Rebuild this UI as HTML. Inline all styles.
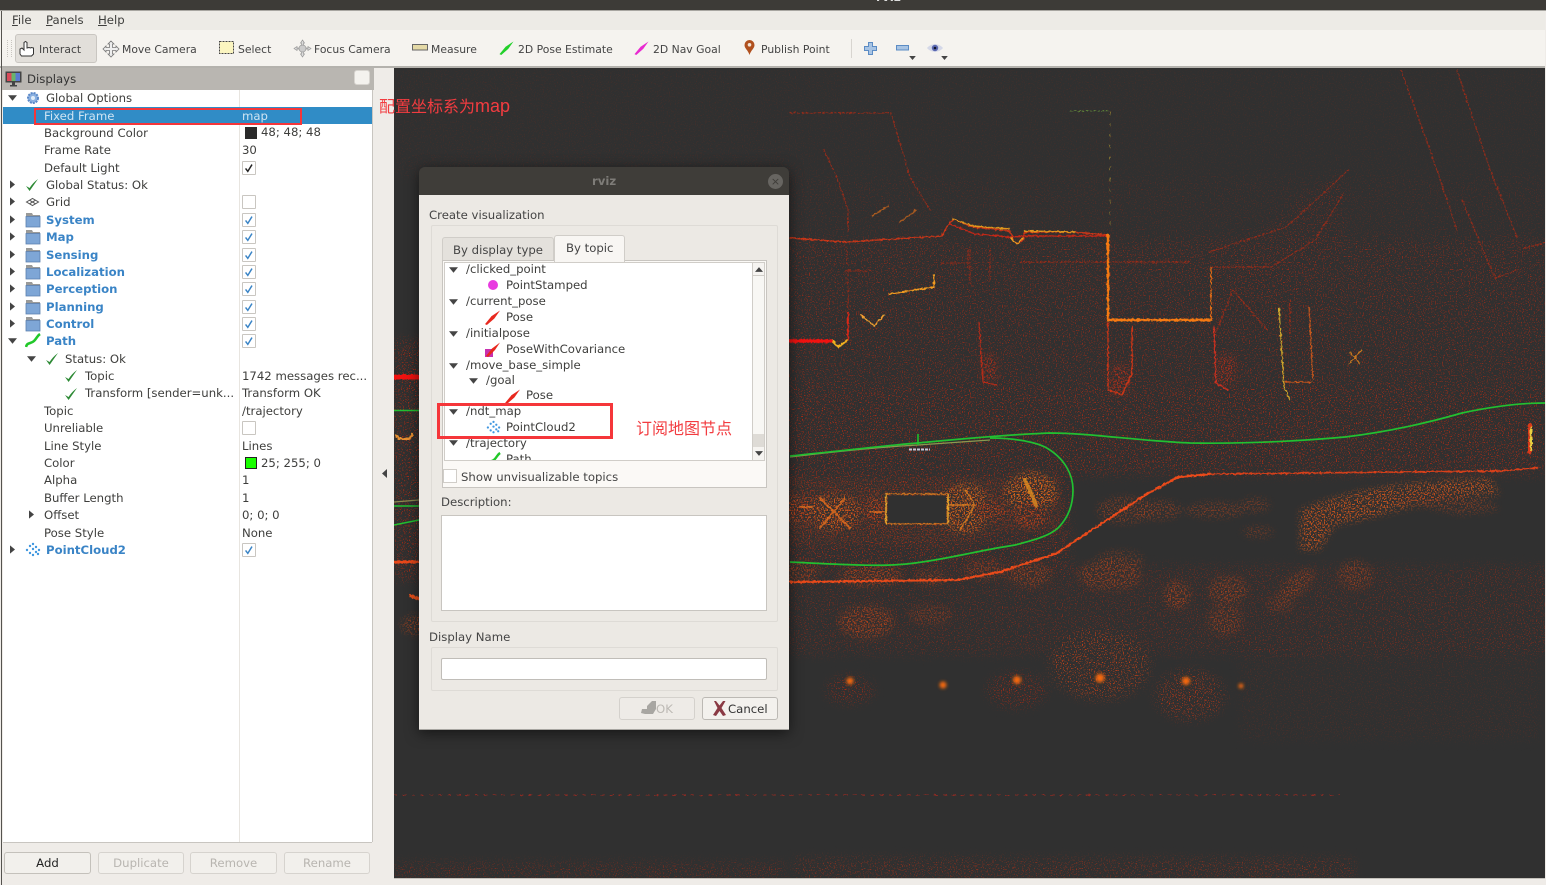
<!DOCTYPE html>
<html><head><meta charset="utf-8"><title>rviz</title>
<style>
html,body{margin:0;padding:0;background:#efece8}
body{position:relative;width:1546px;height:885px;overflow:hidden;font-family:"DejaVu Sans","Liberation Sans",sans-serif;font-size:11.7px;color:#3e3e3c;filter:blur(.35px)}
.a{position:absolute}
.t{position:absolute;line-height:16px;white-space:nowrap}
.p .t{margin-top:1px}
.p .t.n{margin-top:0}
.d .t{margin-top:-1px}
.b{font-weight:bold;color:#3a84c6}
.bt{position:absolute;box-sizing:border-box;height:22px;line-height:21px;text-align:center;background:#f2f0ec;border:1px solid #c4c1bb;border-radius:3px}
.dis{color:#b8b5b0;border-color:#d6d3ce}
.tb{position:absolute;top:42px;line-height:16px;font-size:10.8px;white-space:nowrap;color:#444;margin-top:0}
svg.i{position:absolute;overflow:visible}
.ck{position:absolute;left:242px;width:14px;height:14px;box-sizing:border-box;background:#fff;border:1px solid #c9c6c1;border-radius:1px}
.red{position:absolute;box-sizing:border-box;border:3px solid #f5363a}
.ann{position:absolute;color:#f23c40;font-size:16px;line-height:20px;white-space:nowrap;font-family:"Liberation Sans","Noto Sans CJK SC",sans-serif}
</style></head><body>
<svg width="0" height="0" style="position:absolute"><defs>
<symbol id="folder" viewBox="0 0 16 16"><path d="M1 1h6l1 2h7v12H1z" fill="#9a9a98"/><path d="M1 4.500h14V15H1z" fill="#7ea6d6" stroke="#5a7fae" stroke-width=".8"/></symbol>
<symbol id="chk" viewBox="0 0 14 14"><path d="M3 7.500l2.600 3.400L10.500 3" fill="none" stroke="#3a84c6" stroke-width="1.700"/></symbol>
<symbol id="chkk" viewBox="0 0 14 14"><path d="M3 7.500l2.600 3.400L10.500 3" fill="none" stroke="#222" stroke-width="1.700"/></symbol>
<symbol id="ok" viewBox="0 0 14 14"><path d="M1 8l3.600 5L13 1C9 4 6.400 7 4.600 10z" fill="#2d8a35"/></symbol>
<symbol id="ra" viewBox="0 0 6 10"><path d="M0 0l6 5-6 5z" fill="#444"/></symbol>
<symbol id="da" viewBox="0 0 10 6"><path d="M0 0h10L5 6z" fill="#444"/></symbol>
<symbol id="pc" viewBox="0 0 16 16"><g fill="#3f97e0"><circle cx="2" cy="8" r="1.200"/><circle cx="5" cy="4" r="1.200"/><circle cx="5" cy="11" r="1.200"/><circle cx="8" cy="2" r="1.200"/><circle cx="8" cy="7" r="1.200"/><circle cx="8" cy="13" r="1.200"/><circle cx="11" cy="5" r="1.200"/><circle cx="11" cy="10" r="1.200"/><circle cx="14" cy="8" r="1.200"/><circle cx="13" cy="12" r="1.200"/></g></symbol>
<symbol id="pose" viewBox="0 0 16 16"><path d="M0 15L7 6.500 16 .5 10 9 2 16z" fill="#e8281e"/></symbol>
<symbol id="pth" viewBox="0 0 16 16"><path d="M1 14c1-5 5-3 8-6s3-5 6-7" fill="none" stroke="#22c82a" stroke-width="2.600"/></symbol>
</defs></svg>

<!-- 3D view -->
<div class="a" style="left:394px;top:68px;width:1151px;height:810px;background:#303030"></div>
<svg class="a" style="left:0;top:0" width="1546" height="885" viewBox="0 0 1546 885">
<defs>
<filter id="s1" x="0" y="0" width="1546" height="885" filterUnits="userSpaceOnUse" color-interpolation-filters="sRGB">
<feGaussianBlur in="SourceGraphic" stdDeviation="5" result="b"/>
<feTurbulence type="fractalNoise" baseFrequency="0.85" numOctaves="1" seed="4" result="n"/>
<feColorMatrix in="n" type="matrix" values="0 0 0 0 0 0 0 0 0 0 0 0 0 0 0 0 0 0 14 -8.250" result="t"/>
<feComposite in="b" in2="t" operator="in"/>
<feGaussianBlur stdDeviation=".3"/>
</filter>
<filter id="s2" x="0" y="0" width="1546" height="885" filterUnits="userSpaceOnUse" color-interpolation-filters="sRGB">
<feGaussianBlur in="SourceGraphic" stdDeviation="3.500" result="b"/>
<feTurbulence type="fractalNoise" baseFrequency="0.7" numOctaves="1" seed="11" result="n"/>
<feColorMatrix in="n" type="matrix" values="0 0 0 0 0 0 0 0 0 0 0 0 0 0 0 0 0 0 12 -6.200" result="t"/>
<feComposite in="b" in2="t" operator="in"/>
<feGaussianBlur stdDeviation=".3"/>
</filter>
<filter id="rag" x="0" y="0" width="1546" height="885" filterUnits="userSpaceOnUse" color-interpolation-filters="sRGB">
<feTurbulence type="fractalNoise" baseFrequency="0.35" numOctaves="2" seed="7" result="n"/>
<feDisplacementMap in="SourceGraphic" in2="n" scale="3" xChannelSelector="R" yChannelSelector="G"/>
<feGaussianBlur stdDeviation=".35"/>
</filter>
<filter id="gb" x="0" y="0" width="1546" height="885" filterUnits="userSpaceOnUse"><feGaussianBlur stdDeviation=".3"/></filter>
<filter id="dot" x="0" y="0" width="1546" height="885" filterUnits="userSpaceOnUse"><feGaussianBlur stdDeviation="1.500"/></filter>
</defs>

<!-- sparse speckle -->
<g filter="url(#s1)" fill="#a02c18">
<rect x="394" y="68" width="1151" height="110" opacity=".15"/>
<rect x="790" y="178" width="755" height="62" opacity=".3"/>
<rect x="790" y="240" width="755" height="150" opacity=".75"/>
<rect x="790" y="385" width="755" height="90" opacity="1"/>
<rect x="394" y="340" width="30" height="240" opacity="1"/>
<path d="M1210 270L1340 170L1345 240L1300 300H1210z" opacity=".5"/>
<rect x="790" y="475" width="280" height="95" opacity="1"/>
<rect x="790" y="565" width="760" height="90" opacity=".6"/>
<ellipse cx="1100" cy="665" rx="50" ry="35" fill="#c04018"/>
<ellipse cx="1190" cy="695" rx="35" ry="25" fill="#b83818"/>
<ellipse cx="1017" cy="690" rx="30" ry="18"/>
<ellipse cx="850" cy="690" rx="24" ry="14"/>
<rect x="1240" y="640" width="300" height="100" opacity=".25"/>
<rect x="794" y="858" width="560" height="20" fill="#b03018" opacity=".7"/>
<rect x="394" y="862" width="390" height="16" fill="#a02c18" opacity=".7"/>
</g>

<!-- denser clusters -->
<g filter="url(#s2)" fill="#c8481a" opacity=".85">
<path d="M790 478H1060V488H1060L1060 530H1000L970 545H790z" opacity=".3"/>
<ellipse cx="800" cy="510" rx="22" ry="14"/>
<ellipse cx="835" cy="512" rx="26" ry="18" fill="#e0601a"/>
<ellipse cx="875" cy="510" rx="10" ry="16"/>
<ellipse cx="965" cy="508" rx="26" ry="25" fill="#e06a1c"/>
<ellipse cx="1031" cy="492" rx="26" ry="20" fill="#ee701a"/>
<ellipse cx="1030" cy="515" rx="16" ry="14"/>
<ellipse cx="990" cy="510" rx="18" ry="9"/>
<ellipse cx="870" cy="575" rx="32" ry="12" opacity=".8"/>
<ellipse cx="930" cy="578" rx="16" ry="8" opacity=".7"/>
<ellipse cx="985" cy="570" rx="22" ry="10" opacity=".6"/>
<ellipse cx="800" cy="572" rx="20" ry="10" opacity=".7"/>
<ellipse cx="866" cy="622" rx="28" ry="17" opacity=".8"/>
<ellipse cx="930" cy="615" rx="22" ry="10" opacity=".5"/>
<ellipse cx="1110" cy="575" rx="32" ry="16" opacity=".7"/>
<ellipse cx="1030" cy="575" rx="22" ry="12" opacity=".7"/>
<ellipse cx="1125" cy="510" rx="28" ry="14" opacity=".6"/>
<path d="M1300 510C1340 492 1400 480 1490 478L1500 495C1440 496 1370 520 1335 525L1320 550H1300z" fill="#d8581c"/>
<path d="M1390 500C1430 485 1480 490 1500 510L1460 515z" opacity=".6"/>
<ellipse cx="1160" cy="510" rx="22" ry="10" opacity=".6"/>
<ellipse cx="1215" cy="510" rx="30" ry="8" opacity=".6"/>
<ellipse cx="1255" cy="505" rx="15" ry="8" opacity=".5"/>
<ellipse cx="1258" cy="532" rx="16" ry="6" opacity=".5"/>
<ellipse cx="1177" cy="595" rx="14" ry="14" opacity=".8"/>
<ellipse cx="1228" cy="590" rx="20" ry="14" opacity=".7"/>
<ellipse cx="1225" cy="620" rx="18" ry="16" opacity=".6"/>
<ellipse cx="1296" cy="585" rx="22" ry="10" transform="rotate(-40 1296 585)" opacity=".7"/>
<ellipse cx="1280" cy="605" rx="14" ry="8" opacity=".5"/>
<ellipse cx="1355" cy="575" rx="18" ry="15" opacity=".6"/>
<ellipse cx="1120" cy="560" rx="24" ry="10" opacity=".5"/>
<ellipse cx="415" cy="625" rx="14" ry="10" opacity=".7"/>
<rect x="1111" y="365" width="18" height="28" fill="#b8301a"/>
<rect x="1217" y="355" width="18" height="30" fill="#b8301a"/>
<rect x="982" y="355" width="15" height="26" fill="#b8301a"/>
</g>

<!-- hole in the island -->
<rect x="888" y="496" width="58" height="27" fill="#303030"/>

<!-- rough line work -->
<g filter="url(#rag)" fill="none" stroke-linecap="round" stroke-linejoin="round">
<g stroke="#a02c18" stroke-width="1.200" stroke-dasharray="2 2" opacity=".85">
<path d="M790 113H891M891 113L910 177L930 210M824 150L838 180L848 210V232"/>
<path d="M1401 70L1430 150L1457 230M1457 70L1490 170L1517 237M1462 200L1495 278L1517 270M1524 248L1545 243"/>
<path d="M1209 252L1286 227L1324 193L1348 170M1211 267L1271 267L1315 240L1344 193"/>
<path d="M1233 290L1214 337M1233 290L1267 330M1290 300V335M1020 262H1190"/>
<path d="M848 270V310M847 250V265M845 271H872M968 263H942M968 250V270M970 250V285M990 250V280M1100 262H1108" opacity=".8"/>
</g>
<path d="M790 238L845 242L942 236L948 225L953 219L973 227L1010 231L1013 240L1017 244L1023 240L1025 232L1075 232L1107 235" stroke="#c83618" stroke-width="1.400"/>
<path d="M950 224L975 234L1010 237L1026 236L1107 236" stroke="#c02818" stroke-width="1.400"/>
<path d="M953 219L973 226L1010 229M1025 231L1075 232" stroke="#e0981e" stroke-width="1.400"/>
<path d="M1011 238L1017 244L1023 238" stroke="#f0a020" stroke-width="1.500"/>
<path d="M1108 235V320H1211" stroke="#f67a12" stroke-width="2.400"/>
<path d="M1211 320V267" stroke="#d86a18" stroke-width="1.100"/>
<path d="M1108 323V390L1122 395L1132 373V327" stroke="#c83618" stroke-width="1.400"/>
<path d="M1214 327L1216 383L1228 390" stroke="#c83020" stroke-width="1.400"/>
<path d="M979 323L983 382L997 385" stroke="#b82c18" stroke-width="1.200"/>
<path d="M1279 308L1284 387L1290 400" stroke="#d0a82c" stroke-width="1.200"/>
<path d="M1309 307L1313 380M1285 382H1312" stroke="#c8581c" stroke-width="1.200"/>
<path d="M889 294L934 287V275" stroke="#f09a20" stroke-width="1.700"/>
<path d="M861 315L874 326L884 315" stroke="#f0a030" stroke-width="1.500"/>
<path d="M832 340L838 347L848 340" stroke="#f0b020" stroke-width="2"/>
<path d="M848 340V312" stroke="#d82818" stroke-width="1.600"/>
<path d="M790 341H831" stroke="#f01210" stroke-width="3.600"/>
<path d="M872 216L888 206M900 222L916 210" stroke="#a85a20" stroke-width="1.500"/>
<path d="M1349 364L1362 350M1350 352L1360 364" stroke="#c87820" stroke-width="1.200"/>
<path d="M1530 425V452" stroke="#d83a1a" stroke-width="4"/>
<path d="M1531 428V450" stroke="#e8d040" stroke-width="2"/>
<path d="M1070 111H1110" stroke="#5a7a38" stroke-width="1" stroke-dasharray="2 2"/>
<path d="M1110 112V230" stroke="#7a6a30" stroke-width="1" stroke-dasharray="3 8"/>
<path d="M394 795H1340" stroke="#a82a20" stroke-width="1.100" stroke-dasharray="3 6" opacity=".75"/>
<!-- island -->
<path d="M886 494H948V524H886z" stroke="#c87020" stroke-width="1.200"/>
<path d="M886 494V524M948 495V524" stroke="#e8a82c" stroke-width="1.500"/>
<path d="M820 498L850 528M845 498L820 528M800 507H812M870 512H884" stroke="#e46e1e" stroke-width="2" opacity=".8"/>
<path d="M950 505H975L965 490M975 505L960 530" stroke="#e08020" stroke-width="1.500" opacity=".8"/>
<path d="M1025 480L1036 505" stroke="#e08c20" stroke-width="4" opacity=".8"/>
<!-- road -->
<path d="M790 582L957 580L1000 572L1057 553L1107 520L1145 495L1178 477L1212 474" stroke="#ea4a1a" stroke-width="2.200"/>
<path d="M1212 474L1400 472L1500 471L1538 468" stroke="#d8401a" stroke-width="1.600"/>
<!-- left strip -->
<path d="M394 377H418" stroke="#f01210" stroke-width="5"/>
<path d="M396 435L399 439H410L412 434" stroke="#e89030" stroke-width="2"/>
<path d="M394 562H419" stroke="#e8481a" stroke-width="2.400"/>
<path d="M411 596L419 599" stroke="#e8501a" stroke-width="3.500"/>
</g>

<!-- bright spots -->
<g fill="#f86a10" filter="url(#dot)">
<circle cx="850" cy="681" r="3.500"/><circle cx="943" cy="685" r="3.500"/><circle cx="1017" cy="680" r="4"/><circle cx="1100" cy="678" r="4.500"/><circle cx="1186" cy="681" r="4"/><circle cx="1241" cy="686" r="2.500"/>
</g>

<!-- green trajectories -->
<g fill="none" filter="url(#gb)">
<path d="M790 457C840 451 880 447 918 445L990 440" stroke="#8a9a50" stroke-width="1.200"/>
<path d="M790 456C850 450 880 446 918 443C950 440 1000 435 1050 433C1090 433 1140 441 1190 443C1250 444 1300 441 1345 437C1380 433 1420 425 1462 413C1490 407 1520 403 1545 403" stroke="#20c030" stroke-width="1.700"/>
<path d="M990 438C1010 438 1033 441 1045 447C1065 458 1073 475 1073 490C1073 505 1068 518 1058 528C1048 537 1030 541 1015 545L997 548C960 555 940 560 915 563C885 567 850 565 790 562" stroke="#20c030" stroke-width="1.700"/>
<path d="M918 434V445" stroke="#1fc82c" stroke-width="1.500"/>
<path d="M394 410.500H419M394 506H419M394 525L419 520" stroke="#20c030" stroke-width="1.500"/>
<path d="M394 502L419 500" stroke="#8a8a50" stroke-width="1.200"/>
<path d="M909 449.500H930" stroke="#c8c8d8" stroke-width="2" stroke-dasharray="3 1"/>
</g>
</svg>

<!-- window chrome -->
<div class="a" style="left:0;top:0;width:1546px;height:10px;background:#3d3b37"></div>
<div class="a" style="left:876px;top:-9px;color:#ddd;font-weight:bold;line-height:12px;font-size:12px">rviz</div>
<div class="a" style="left:0;top:10px;width:1546px;height:1px;background:#a8a6a1"></div>
<div class="a" style="left:0;top:11px;width:1546px;height:19px;background:#edebe6"></div>
<div class="a" style="left:0;top:30px;width:1546px;height:36px;background:#f5f3ef"></div>
<div class="a" style="left:0;top:66px;width:1546px;height:2px;background:#b4b2ad"></div>
<div class="a" style="left:1px;top:11px;width:1px;height:874px;background:#55534f;z-index:9"></div>
<div class="a" style="left:1545px;top:11px;width:1px;height:874px;background:#efece8"></div>

<div class="t" style="left:12px;top:12px"><u>F</u>ile</div>
<div class="t" style="left:46px;top:12px"><u>P</u>anels</div>
<div class="t" style="left:98px;top:12px"><u>H</u>elp</div>

<!-- toolbar -->
<div class="a" style="left:7px;top:40px;width:3px;height:17px;border-left:1px dotted #c8c5c0;border-right:1px dotted #c8c5c0"></div>
<div class="a" style="left:15px;top:34px;width:82px;height:29px;box-sizing:border-box;background:#e2dfda;border:1px solid #c9c6c1;border-radius:3px"></div>
<svg class="i" style="left:19px;top:41px" width="16" height="16" viewBox="0 0 16 16"><path d="M1 8v5l1.500 2h10l2-2V7l-2-.5-1 .5-1.500-.5L8 7V1.500L6.500 .5 5 1.500V9L3 7z" fill="#fff" stroke="#333" stroke-width="1"/></svg>
<div class="tb" style="left:39px">Interact</div>
<svg class="i" style="left:103px;top:41px" width="16" height="16" viewBox="0 0 16 16"><path d="M8 0l3 3H9.500v3.500H13V5l3 3-3 3V9.500H9.500V13H11l-3 3-3-3h1.500V9.500H3V11L0 8l3-3v1.500h3.500V3H5z" fill="#eee" stroke="#777" stroke-width=".8"/></svg>
<div class="tb" style="left:122px">Move Camera</div>
<svg class="i" style="left:219px;top:41px" width="16" height="14" viewBox="0 0 16 14"><rect x=".5" y=".5" width="14" height="12" fill="#fbf5c0" stroke="#444" stroke-width="1" stroke-dasharray="2 1"/></svg>
<div class="tb" style="left:238px">Select</div>
<svg class="i" style="left:294px;top:40px" width="17" height="17" viewBox="0 0 17 17"><path d="M8.500 0l2 3H9.500v2.500L12 8h2V6.500l3 2-3 2V9h-2l-2.500 2.500V14h1l-2 3-2-3h1v-2.500L5 9H3v1.500l-3-2 3-2V8h2l2.500-2.500V3h-1z" fill="#ddd" stroke="#999" stroke-width=".7"/><circle cx="8.500" cy="8.500" r="3.500" fill="#ccc" stroke="#999" stroke-width=".7"/></svg>
<div class="tb" style="left:314px">Focus Camera</div>
<svg class="i" style="left:412px;top:44px" width="16" height="7" viewBox="0 0 16 7"><rect x=".5" y=".5" width="15" height="5.500" fill="#e4d9a6" stroke="#666" stroke-width="1"/></svg>
<div class="tb" style="left:431px">Measure</div>
<svg class="i" style="left:499px;top:41px" width="15" height="14" viewBox="0 0 16 16"><path d="M0 15L7 6.500 16 .5 10 9 2 16z" fill="#22d02a"/></svg>
<div class="tb" style="left:518px">2D Pose Estimate</div>
<svg class="i" style="left:634px;top:41px" width="15" height="14" viewBox="0 0 16 16"><path d="M0 15L7 6.500 16 .5 10 9 2 16z" fill="#e82ad0"/></svg>
<div class="tb" style="left:653px">2D Nav Goal</div>
<svg class="i" style="left:744px;top:40px" width="11" height="15" viewBox="0 0 11 15"><path d="M5.500 15C4 10 .5 8.500 .5 5a5 5 0 0 1 10 0c0 3.500-3.500 5-5 10z" fill="#b0501e"/><circle cx="5.500" cy="4.800" r="1.800" fill="#f3e3d3"/></svg>
<div class="tb" style="left:761px">Publish Point</div>
<div class="a" style="left:851px;top:39px;width:1px;height:19px;background:#d8d5d0"></div>
<svg class="i" style="left:864px;top:42px" width="13" height="13" viewBox="0 0 13 13"><path d="M4.500 .5h4v4h4v4h-4v4h-4v-4h-4v-4h4z" fill="#a8c4e4" stroke="#5c8cc4" stroke-width="1"/></svg>
<svg class="i" style="left:896px;top:45px" width="13" height="6" viewBox="0 0 13 6"><rect x=".5" y=".5" width="12" height="4.500" fill="#a8c4e4" stroke="#5c8cc4" stroke-width="1"/></svg>
<svg class="i" style="left:909px;top:56px" width="7" height="4" viewBox="0 0 10 6"><use href="#da" width="10" height="6"/></svg>
<svg class="i" style="left:927px;top:43px" width="16" height="10" viewBox="0 0 16 10"><path d="M0 5C4 0 12 0 16 5 12 10 4 10 0 5z" fill="#d4d8e8"/><circle cx="8" cy="5" r="3.200" fill="#5a68b0"/><circle cx="8" cy="5" r="1.300" fill="#10142c"/></svg>
<svg class="i" style="left:941px;top:56px" width="7" height="4" viewBox="0 0 10 6"><use href="#da" width="10" height="6"/></svg>

<!-- displays panel -->
<div class="a" style="left:2px;top:68px;width:392px;height:817px;background:#efece8"></div>
<div class="a" style="left:2px;top:68px;width:372px;height:22px;background:#b9b6b1"></div>
<svg class="i" style="left:5px;top:71px" width="17" height="16" viewBox="0 0 17 16"><rect x=".5" y=".5" width="16" height="11" fill="#444"/><rect x="2" y="2" width="4.500" height="8" fill="#d84a5a"/><rect x="6.500" y="2" width="4" height="8" fill="#6ab46a"/><rect x="10.500" y="2" width="4.500" height="8" fill="#5a7ad0"/><path d="M5 14h7v1.500H5zM7 11.500h3V14H7z" fill="#444"/></svg>
<div class="t" style="left:27px;top:71px;color:#333">Displays</div>
<div class="a" style="left:354px;top:70px;width:16px;height:15px;background:#f4f2ee;border:1px solid #d8d5d0;border-radius:3px;box-sizing:border-box"></div>
<div class="a" style="left:3px;top:90px;width:369px;height:752px;background:#fff;border-bottom:1px solid #c8c5c0"></div>
<div class="a" style="left:372px;top:90px;width:1px;height:752px;background:#c8c5c0"></div>
<div class="a" style="left:239px;top:90px;width:1px;height:752px;background:#e8e5e0;z-index:1"></div>
<div class="a" style="left:3px;top:107px;width:369px;height:17px;background:#308cc6;z-index:2"></div>

<!-- rows -->
<div class="p">
<svg class="i" style="left:8px;top:95px" width="9" height="6"><use href="#da" width="9" height="6"/></svg>
<svg class="i" style="left:26px;top:91px" width="14" height="14" viewBox="0 0 14 14"><circle cx="7" cy="7" r="5" fill="#8ab0e0" stroke="#5a88c8" stroke-width="2" stroke-dasharray="2 1"/><circle cx="7" cy="7" r="2" fill="#e0ecf8"/></svg>
<div class="t n" style="left:46px;top:90px">Global Options</div>
<div class="t n" style="left:44px;top:108px;color:#cfe4f3;z-index:3">Fixed Frame</div><div class="t n" style="left:242px;top:108px;color:#cfe4f3;z-index:3">map</div>
<div class="t n" style="left:44px;top:125px">Background Color</div><div class="a" style="left:245px;top:127px;width:12px;height:12px;background:#2a2a2a"></div><div class="t n" style="left:261px;top:124px">48; 48; 48</div>
<div class="t n" style="left:44px;top:142px">Frame Rate</div><div class="t n" style="left:242px;top:142px">30</div>
<div class="t n" style="left:44px;top:160px">Default Light</div><div class="ck" style="top:161px"><svg width="12" height="12" style="display:block"><use href="#chkk" width="12" height="12"/></svg></div>
<svg class="i" style="left:10px;top:180px" width="5" height="9"><use href="#ra" width="5" height="9"/></svg><svg class="i" style="left:25px;top:178px" width="14" height="14"><use href="#ok" width="14" height="14"/></svg><div class="t n" style="left:46px;top:177px">Global Status: Ok</div>
<svg class="i" style="left:10px;top:197px" width="5" height="9"><use href="#ra" width="5" height="9"/></svg><svg class="i" style="left:26px;top:198px" width="13" height="8" viewBox="0 0 13 8"><path d="M.5 4L6.500 .5 12.500 4 6.500 7.500z M3.500 2.200L9.500 5.800M9.500 2.200L3.500 5.800" fill="none" stroke="#555" stroke-width="1"/></svg><div class="t n" style="left:46px;top:194px">Grid</div><div class="ck" style="top:195px"></div>

<svg class="i" style="left:10px;top:215px" width="5" height="9"><use href="#ra" width="5" height="9"/></svg><svg class="i" style="left:25px;top:212px" width="16" height="16"><use href="#folder" width="16" height="16"/></svg><div class="t b n" style="left:46px;top:212px">System</div><div class="ck" style="top:213px"><svg width="12" height="12" style="display:block"><use href="#chk" width="12" height="12"/></svg></div>
<svg class="i" style="left:10px;top:232px" width="5" height="9"><use href="#ra" width="5" height="9"/></svg><svg class="i" style="left:25px;top:229px" width="16" height="16"><use href="#folder" width="16" height="16"/></svg><div class="t b n" style="left:46px;top:229px">Map</div><div class="ck" style="top:230px"><svg width="12" height="12" style="display:block"><use href="#chk" width="12" height="12"/></svg></div>
<svg class="i" style="left:10px;top:250px" width="5" height="9"><use href="#ra" width="5" height="9"/></svg><svg class="i" style="left:25px;top:247px" width="16" height="16"><use href="#folder" width="16" height="16"/></svg><div class="t b n" style="left:46px;top:247px">Sensing</div><div class="ck" style="top:248px"><svg width="12" height="12" style="display:block"><use href="#chk" width="12" height="12"/></svg></div>
<svg class="i" style="left:10px;top:267px" width="5" height="9"><use href="#ra" width="5" height="9"/></svg><svg class="i" style="left:25px;top:264px" width="16" height="16"><use href="#folder" width="16" height="16"/></svg><div class="t b n" style="left:46px;top:264px">Localization</div><div class="ck" style="top:265px"><svg width="12" height="12" style="display:block"><use href="#chk" width="12" height="12"/></svg></div>
<svg class="i" style="left:10px;top:284px" width="5" height="9"><use href="#ra" width="5" height="9"/></svg><svg class="i" style="left:25px;top:281px" width="16" height="16"><use href="#folder" width="16" height="16"/></svg><div class="t b n" style="left:46px;top:281px">Perception</div><div class="ck" style="top:282px"><svg width="12" height="12" style="display:block"><use href="#chk" width="12" height="12"/></svg></div>
<svg class="i" style="left:10px;top:302px" width="5" height="9"><use href="#ra" width="5" height="9"/></svg><svg class="i" style="left:25px;top:299px" width="16" height="16"><use href="#folder" width="16" height="16"/></svg><div class="t b n" style="left:46px;top:299px">Planning</div><div class="ck" style="top:300px"><svg width="12" height="12" style="display:block"><use href="#chk" width="12" height="12"/></svg></div>
<svg class="i" style="left:10px;top:319px" width="5" height="9"><use href="#ra" width="5" height="9"/></svg><svg class="i" style="left:25px;top:316px" width="16" height="16"><use href="#folder" width="16" height="16"/></svg><div class="t b n" style="left:46px;top:316px">Control</div><div class="ck" style="top:317px"><svg width="12" height="12" style="display:block"><use href="#chk" width="12" height="12"/></svg></div>
<svg class="i" style="left:8px;top:338px" width="9" height="6"><use href="#da" width="9" height="6"/></svg><svg class="i" style="left:25px;top:333px" width="16" height="16"><use href="#pth" width="16" height="16"/></svg><div class="t b n" style="left:46px;top:333px">Path</div><div class="ck" style="top:334px"><svg width="12" height="12" style="display:block"><use href="#chk" width="12" height="12"/></svg></div>
<svg class="i" style="left:27px;top:356px" width="9" height="6"><use href="#da" width="9" height="6"/></svg><svg class="i" style="left:45px;top:352px" width="14" height="14"><use href="#ok" width="14" height="14"/></svg><div class="t n" style="left:65px;top:351px">Status: Ok</div>
<svg class="i" style="left:64px;top:369px" width="14" height="14"><use href="#ok" width="14" height="14"/></svg><div class="t n" style="left:85px;top:368px">Topic</div><div class="t n" style="left:242px;top:368px">1742 messages rec...</div>
<svg class="i" style="left:64px;top:387px" width="14" height="14"><use href="#ok" width="14" height="14"/></svg><div class="t n" style="left:85px;top:385px">Transform [sender=unk...</div><div class="t n" style="left:242px;top:385px">Transform OK</div>
<div class="t n" style="left:44px;top:403px">Topic</div><div class="t n" style="left:242px;top:403px">/trajectory</div>
<div class="t n" style="left:44px;top:420px">Unreliable</div><div class="ck" style="top:421px"></div>
<div class="t n" style="left:44px;top:438px">Line Style</div><div class="t n" style="left:242px;top:438px">Lines</div>
<div class="t n" style="left:44px;top:455px">Color</div><div class="a" style="left:245px;top:457px;width:12px;height:12px;box-sizing:border-box;background:#19ff00;border:1px solid #222"></div><div class="t n" style="left:261px;top:455px">25; 255; 0</div>
<div class="t n" style="left:44px;top:472px">Alpha</div><div class="t n" style="left:242px;top:472px">1</div>
<div class="t n" style="left:44px;top:490px">Buffer Length</div><div class="t n" style="left:242px;top:490px">1</div>
<svg class="i" style="left:29px;top:510px" width="5" height="9"><use href="#ra" width="5" height="9"/></svg><div class="t n" style="left:44px;top:507px">Offset</div><div class="t n" style="left:242px;top:507px">0; 0; 0</div>
<div class="t n" style="left:44px;top:525px">Pose Style</div><div class="t n" style="left:242px;top:525px">None</div>
<svg class="i" style="left:10px;top:545px" width="5" height="9"><use href="#ra" width="5" height="9"/></svg><svg class="i" style="left:25px;top:542px" width="16" height="16"><use href="#pc" width="16" height="16"/></svg><div class="t b n" style="left:46px;top:542px">PointCloud2</div><div class="ck" style="top:543px"><svg width="12" height="12" style="display:block"><use href="#chk" width="12" height="12"/></svg></div>
</div>

<div class="bt" style="left:4px;top:852px;width:87px;color:#222">Add</div>
<div class="bt dis" style="left:98px;top:852px;width:86px">Duplicate</div>
<div class="bt dis" style="left:190px;top:852px;width:87px">Remove</div>
<div class="bt dis" style="left:284px;top:852px;width:86px">Rename</div>
<svg class="i" style="left:382px;top:469px" width="5" height="9"><path d="M5 0L0 4.500 5 9z" fill="#444"/></svg>
<div class="a" style="left:394px;top:878px;width:1151px;height:7px;background:#efece8;border-top:1px solid #c4c1bb;box-sizing:border-box"></div>

<!-- dialog -->
<div class="a" style="left:419px;top:167px;width:370px;height:563px;box-shadow:0 3px 14px rgba(0,0,0,.55);border-radius:6px 6px 0 0"></div>
<div class="a" style="left:419px;top:167px;width:370px;height:28px;background:#3f3d39;border-radius:6px 6px 0 0"></div>
<div class="a" style="left:419px;top:195px;width:370px;height:535px;background:#ece9e4;border-bottom:1px solid #a8a6a1;box-sizing:border-box"></div>
<div class="t" style="left:592px;top:173px;color:#7e7c78;font-weight:bold">rviz</div>
<div class="a" style="left:768px;top:174px;width:15px;height:15px;border-radius:50%;background:#676561;color:#3f3d39;font-size:11px;line-height:15px;text-align:center">×</div>
<div class="t" style="left:429px;top:207px;color:#444">Create visualization</div>
<div class="a" style="left:431px;top:225px;width:347px;height:397px;box-sizing:border-box;border:1px solid #dedbd6;border-radius:2px"></div>
<div class="t" style="left:441px;top:494px;color:#444">Description:</div>
<div class="a" style="left:442px;top:237px;width:112px;height:24px;box-sizing:border-box;background:#e4e1dc;border:1px solid #d0cdc8;border-radius:3px 3px 0 0"></div>
<div class="a" style="left:554px;top:235px;width:71px;height:27px;box-sizing:border-box;background:#f8f6f3;border:1px solid #d0cdc8;border-bottom:0;border-radius:3px 3px 0 0;z-index:3"></div>
<div class="t" style="left:453px;top:242px;color:#444">By display type</div>
<div class="t" style="left:566px;top:240px;color:#444;z-index:4">By topic</div>
<div class="a" style="left:442px;top:260px;width:325px;height:228px;box-sizing:border-box;background:#fbf9f6;border:1px solid #c8c5c0"></div>
<div class="a d" style="left:444px;top:262px;width:321px;height:199px;box-sizing:border-box;background:#fff;border:1px solid #d0cdc8;overflow:hidden">
<div class="t" style="left:21px;top:-1px">/clicked_point</div>
<svg class="i" style="left:4px;top:4px" width="9" height="6"><use href="#da" width="9" height="6"/></svg>
<svg class="i" style="left:43px;top:17px" width="10" height="10"><circle cx="5" cy="5" r="5" fill="#e83ae0"/></svg>
<div class="t" style="left:61px;top:15px">PointStamped</div>
<svg class="i" style="left:4px;top:36px" width="9" height="6"><use href="#da" width="9" height="6"/></svg>
<div class="t" style="left:21px;top:31px">/current_pose</div>
<svg class="i" style="left:40px;top:47px" width="15" height="15"><use href="#pose" width="15" height="15"/></svg>
<div class="t" style="left:61px;top:47px">Pose</div>
<svg class="i" style="left:4px;top:68px" width="9" height="6"><use href="#da" width="9" height="6"/></svg>
<div class="t" style="left:21px;top:63px">/initialpose</div>
<svg class="i" style="left:40px;top:79px" width="15" height="15" viewBox="0 0 15 15"><rect x="0" y="7" width="8" height="8" fill="#c830b0"/><path d="M1 14L7 6.500 15 .5 10 8 3 15z" fill="#e8281e"/></svg>
<div class="t" style="left:61px;top:79px">PoseWithCovariance</div>
<svg class="i" style="left:4px;top:100px" width="9" height="6"><use href="#da" width="9" height="6"/></svg>
<div class="t" style="left:21px;top:95px">/move_base_simple</div>
<svg class="i" style="left:24px;top:115px" width="9" height="6"><use href="#da" width="9" height="6"/></svg>
<div class="t" style="left:41px;top:110px">/goal</div>
<svg class="i" style="left:60px;top:126px" width="15" height="15"><use href="#pose" width="15" height="15"/></svg>
<div class="t" style="left:81px;top:125px">Pose</div>
<svg class="i" style="left:4px;top:146px" width="9" height="6"><use href="#da" width="9" height="6"/></svg>
<div class="t" style="left:21px;top:141px">/ndt_map</div>
<svg class="i" style="left:41px;top:157px" width="15" height="15"><use href="#pc" width="15" height="15"/></svg>
<div class="t" style="left:61px;top:157px">PointCloud2</div>
<svg class="i" style="left:4px;top:177px" width="9" height="6"><use href="#da" width="9" height="6"/></svg>
<div class="t" style="left:21px;top:173px">/trajectory</div>
<svg class="i" style="left:41px;top:189px" width="15" height="15"><use href="#pth" width="15" height="15"/></svg>
<div class="t" style="left:61px;top:189px">Path</div>
<div class="a" style="left:307px;top:0;width:12px;height:197px;background:#f6f4f1;border-left:1px solid #d0cdc8"></div>
<div class="a" style="left:308px;top:12px;width:12px;height:158px;background:#f8f7f4;border-top:1px solid #d0cdc8;border-bottom:1px solid #d0cdc8"></div>
<div class="a" style="left:308px;top:171px;width:12px;height:13px;background:#dedbd6"></div>
<svg class="i" style="left:310px;top:4px" width="8" height="5" viewBox="0 0 10 6"><path d="M0 6h10L5 0z" fill="#444"/></svg>
<svg class="i" style="left:310px;top:188px" width="8" height="5"><use href="#da" width="8" height="5"/></svg>
</div>
<div class="a" style="left:443px;top:469px;width:14px;height:14px;box-sizing:border-box;background:#fff;border:1px solid #d0cdc8"></div>
<div class="t" style="left:461px;top:469px;color:#444">Show unvisualizable topics</div>

<div class="a" style="left:441px;top:515px;width:326px;height:96px;box-sizing:border-box;background:#fff;border:1px solid #c8c5c0"></div>
<div class="t" style="left:429px;top:629px;color:#444">Display Name</div>
<div class="a" style="left:431px;top:647px;width:347px;height:44px;box-sizing:border-box;border:1px solid #dedbd6;border-radius:2px"></div>
<div class="a" style="left:441px;top:658px;width:326px;height:22px;box-sizing:border-box;background:#fff;border:1px solid #c0bdb8;border-radius:2px"></div>
<div class="a" style="left:619px;top:697px;width:76px;height:23px;box-sizing:border-box;background:#eeebe7;border:1px solid #d4d1cc;border-radius:3px"></div>
<svg class="i" style="left:640px;top:701px" width="17" height="15" viewBox="0 0 17 15"><path d="M2 8h5V5l5-5h4v8l-3 5H5L1 12z" fill="#a8a6a2"/></svg>
<div class="t" style="left:656px;top:701px;color:#bcb9b4">OK</div>
<div class="a" style="left:702px;top:697px;width:76px;height:23px;box-sizing:border-box;background:#f3f1ed;border:1px solid #bcb9b4;border-radius:3px"></div>
<svg class="i" style="left:713px;top:701px" width="13" height="15" viewBox="0 0 13 15"><path d="M1 0l2 0 3.500 4.500L10 0h2.500L8.500 7l4.500 7-3 1-3.500-5L3 15l-3-1 4.500-7z" fill="#8a3a44"/></svg>
<div class="t" style="left:728px;top:701px;color:#333">Cancel</div>

<!-- annotations -->
<div class="red" style="left:34px;top:108px;width:268px;height:17px;z-index:5;border-width:2px"></div>
<div class="ann" style="left:379px;top:97px;z-index:5">配置坐标系为<span style="font-size:18px;line-height:18px">map</span></div>
<div class="red" style="left:437px;top:403px;width:176px;height:36px;z-index:5"></div>
<div class="ann" style="left:636px;top:420px;z-index:5">订阅地图节点</div>
</body></html>
